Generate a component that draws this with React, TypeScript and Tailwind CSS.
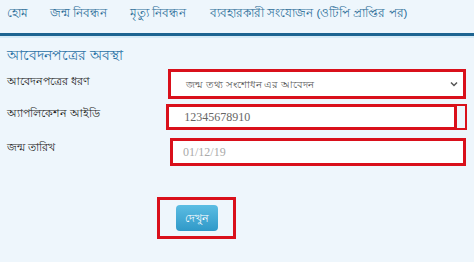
export default function App() {
  return (
    <div className="h-[262px] w-[474px] overflow-hidden bg-[#eef6fc] font-['Liberation_Sans','Noto_Sans',sans-serif] text-[13px]">
      {/* Top menu */}
      <nav className="flex h-[33px] items-start pl-[7px] pt-[5px] text-[11.5px] text-[#2c6e99]">
        <span className="w-[43px]">হোম</span>
        <span className="w-[80px]">জন্ম নিবন্ধন</span>
        <span className="w-[80px]">মৃত্যু নিবন্ধন</span>
        <span>ব্যবহারকারী সংযোজন (ওটিপি প্রাপ্তির পর)</span>
      </nav>
      <div className="h-[3px] bg-[#1d6491]" />
      <div className="h-[2px] bg-[#d6ebf7]" />

      <main className="px-[7px] pt-[8px]">
        <h2 className="text-[14px] leading-[18px] text-[#2b73a6]">আবেদনপত্রের অবস্থা</h2>

        <div className="mt-[5px] flex flex-col">
          <div className="flex items-start">
            <label className="w-[161px] pt-[4px] text-[11px] leading-[16px] text-[#222]">আবেদনপত্রের ধরণ</label>
            <div className="flex h-[30px] w-[298px] items-center justify-between border-[3px] border-[#d9101b] bg-white pl-[15px] pr-[4px] text-[10px] text-[#555]">
              <span>জন্ম তথ্য সংশোধন এর আবেদন</span>
              <svg width="10" height="10" viewBox="0 0 10 10" className="text-[#555]">
                <path d="M2 3.5 L5 6.5 L8 3.5" fill="none" stroke="currentColor" strokeWidth="1.5" />
              </svg>
            </div>
          </div>

          <div className="mt-[5px] flex items-start">
            <label className="w-[161px] pt-[1px] text-[11px] leading-[16px] text-[#222]">অ্যাপলিকেশন আইডি</label>
            <div className="flex h-[26px] w-[294px] items-center border-[3px] border-[#d9101b] bg-white pl-[15px] font-['Liberation_Serif',serif] text-[12px] text-[#666]">
              12345678910
            </div>
            <div className="h-[26px] w-[10px] border-[2px] border-l-0 border-[#d9101b]" />
          </div>

          <div className="mt-[8px] flex items-start">
            <label className="w-[163px] pt-[1px] text-[11px] leading-[16px] text-[#222]">জন্ম তারিখ</label>
            <div className="flex h-[28px] w-[296px] items-center border-[3px] border-[#d9101b] bg-white pl-[10px] font-['Liberation_Serif',serif] text-[12px] text-[#aaa]">
              01/12/19
            </div>
          </div>
        </div>

        <div className="ml-[150px] mt-[31px] flex h-[42px] w-[79px] items-center justify-center border-[3px] border-[#d9101b]">
          <button className="h-[26px] w-[42px] rounded-[4px] bg-gradient-to-b from-[#5bbde3] to-[#2f99c8] text-[11px] text-white">
            দেখুন
          </button>
        </div>
      </main>
    </div>
  );
}
